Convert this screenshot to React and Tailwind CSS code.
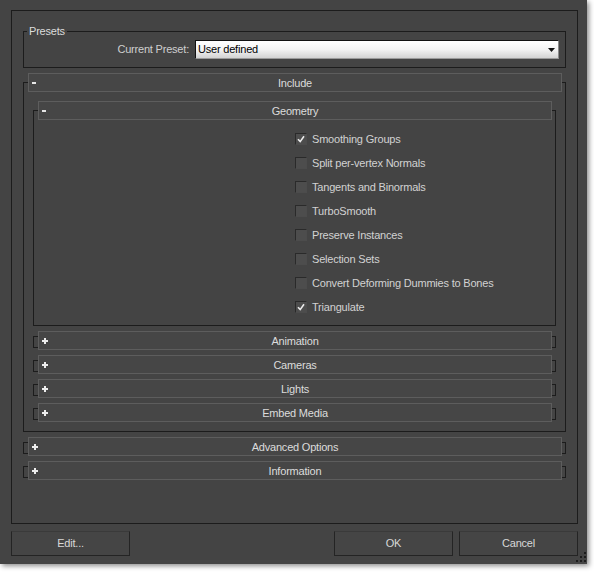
import React from "react";

function Plus() {
  return (
    <svg width="6" height="6" viewBox="0 0 6 6" className="block">
      <rect x="2" y="0" width="2" height="6" fill="#eeeeee" />
      <rect x="0" y="2" width="6" height="2" fill="#eeeeee" />
    </svg>
  );
}

function Minus() {
  return <div className="h-[2px] w-[4px] bg-[#e6e6e6]" />;
}

function Header({ label, open }) {
  return (
    <div className="relative z-10 ml-[5px] mr-[4px] grid h-[19px] grid-cols-[16px_1fr_16px] items-center border border-[#5d5d5d] bg-[#464646]">
      <div className="flex items-center pl-[3px]">{open ? <Minus /> : <Plus />}</div>
      <div className="pt-[1px] text-center leading-[16px] text-[#dcdcdc]">{label}</div>
      <div />
    </div>
  );
}

function Collapsed({ label }) {
  return (
    <div className="flex flex-col">
      <Header label={label} />
      <div className="-mt-[14px] mb-[2px] h-[12px] border border-[#1c1c1c]" />
    </div>
  );
}

function Check({ checked }) {
  return (
    <div className="flex h-[12px] w-[12px] items-center justify-center border border-[#2a2a2a] border-r-[#4c4c4c] border-b-[#4c4c4c] bg-[#4d4d4d]">
      {checked && (
        <svg width="8" height="8" viewBox="0 0 8 8" className="block">
          <path d="M1 4.2 L3.2 6.6 L7 1.2" stroke="#ececec" strokeWidth="1.6" fill="none" />
        </svg>
      )}
    </div>
  );
}

const options = [
  ["Smoothing Groups", true],
  ["Split per-vertex Normals", false],
  ["Tangents and Binormals", false],
  ["TurboSmooth", false],
  ["Preserve Instances", false],
  ["Selection Sets", false],
  ["Convert Deforming Dummies to Bones", false],
  ["Triangulate", true],
];

function Button({ children }) {
  return (
    <div className="flex h-[25px] w-[119px] items-center justify-center border border-[#242424] border-t-[#3a3a3a] bg-[#454545] text-[#d8d8d8]">
      {children}
    </div>
  );
}

export default function App() {
  return (
    <div className="h-[572px] w-[594px] bg-white font-['Liberation_Sans',Arial,sans-serif] text-[11px] tracking-[-0.2px]">
      <div className="relative flex h-[564px] w-[587px] flex-col bg-[#444444] pl-[11px] pt-[10px] shadow-[2px_2px_5px_rgba(0,0,0,0.45)]">
        {/* scroll area */}
        <div className="flex h-[514px] w-[567px] flex-col gap-[5px] border border-[#1c1c1c] px-[11px] pt-[20px]">
          {/* Presets group */}
          <div className="flex flex-col border border-[#1c1c1c] pb-[8px]">
            <div className="-mt-[8px] ml-[3px] h-[14px] w-fit bg-[#444444] px-[2px] leading-[14px] text-[#dcdcdc]">
              Presets
            </div>
            <div className="mt-[2px] flex h-[19px] items-center justify-end gap-[6px] pr-[6px]">
              <span className="text-[#cfcfcf]">Current Preset:</span>
              <div className="flex h-[19px] w-[364px] items-center justify-between border border-[#111] border-r-[#8a8a8a] border-b-[#9a9a9a] bg-linear-to-b from-[#ffffff] via-[#f3f3f3] to-[#d3d3d3] pl-[2px] pr-[3px] text-black">
                <span>User defined</span>
                <svg width="7" height="4" viewBox="0 0 7 4" className="block">
                  <path d="M0 0 H7 L3.5 4 Z" fill="#111" />
                </svg>
              </div>
            </div>
          </div>

          {/* Include */}
          <div className="flex flex-col">
            <Header label="Include" open />
            <div className="-mt-[10px] flex flex-col gap-[5px] border border-[#1c1c1c] px-[9px] pb-[9px] pt-[18px]">
              {/* Geometry */}
              <div className="flex flex-col">
                <Header label="Geometry" open />
                <div className="-mt-[10px] flex flex-col border border-[#1c1c1c] pb-[6px] pl-[261px] pt-[16px]">
                  {options.map(([label, checked]) => (
                    <div key={label} className="flex h-[24px] items-center gap-[5px]">
                      <Check checked={checked} />
                      <span className="text-[#d2d2d2]">{label}</span>
                    </div>
                  ))}
                </div>
              </div>
              <Collapsed label="Animation" />
              <Collapsed label="Cameras" />
              <Collapsed label="Lights" />
              <Collapsed label="Embed Media" />
            </div>
          </div>

          <Collapsed label="Advanced Options" />
          <Collapsed label="Information" />
        </div>

        {/* buttons */}
        <div className="mt-[7px] flex w-[567px] justify-between">
          <Button>Edit...</Button>
          <div className="flex gap-[6px]">
            <Button>OK</Button>
            <Button>Cancel</Button>
          </div>
        </div>

        {/* resize grip */}
        <svg width="10" height="10" viewBox="0 0 10 10" className="absolute bottom-[2px] right-[1px] block">
          <rect x="8" y="0" width="2" height="2" fill="#1c1c1c" />
          <rect x="4" y="4" width="2" height="2" fill="#1c1c1c" />
          <rect x="8" y="4" width="2" height="2" fill="#1c1c1c" />
          <rect x="0" y="8" width="2" height="2" fill="#1c1c1c" />
          <rect x="4" y="8" width="2" height="2" fill="#1c1c1c" />
          <rect x="8" y="8" width="2" height="2" fill="#1c1c1c" />
        </svg>
      </div>
    </div>
  );
}
